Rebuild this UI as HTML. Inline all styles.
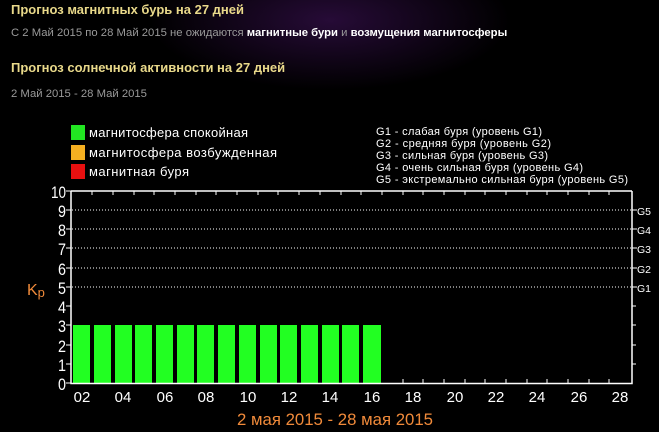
<!DOCTYPE html>
<html><head><meta charset="utf-8"><style>
body{margin:0;width:659px;height:432px;overflow:hidden;background:#000;font-family:"Liberation Sans",sans-serif;position:relative}
.bg{position:absolute;left:0;top:0;width:659px;height:110px;background:radial-gradient(ellipse 180px 70px at 330px 20px,rgba(70,20,100,.55),rgba(0,0,0,0))}
.t{position:absolute;left:11px;color:#e9d98a;font-weight:bold;font-size:13px}
.s{position:absolute;left:11px;color:#9a9a9a;font-size:11.3px}
.s b{color:#fff}
</style></head><body>
<div class="bg"></div>
<div class="t" style="top:2px">Прогноз магнитных бурь на 27 дней</div>
<div class="s" style="top:27px">С 2 Май 2015 по 28 Май 2015 не ожидаются <b>магнитные бури</b> и <b>возмущения магнитосферы</b></div>
<div class="t" style="top:60px">Прогноз солнечной активности на 27 дней</div>
<div class="s" style="top:88px">2 Май 2015 - 28 Май 2015</div>
<svg width="659" height="432" style="position:absolute;left:0;top:0" font-family="Liberation Sans, sans-serif">
<rect x="71" y="125" width="14" height="15" fill="#22e622"/>
<rect x="71" y="145" width="14" height="15" fill="#f5b021"/>
<rect x="71" y="164" width="14" height="15" fill="#e81010"/>
<g fill="#fff" font-size="13"><text x="89" y="137" textLength="159">магнитосфера спокойная</text><text x="89" y="157" textLength="188">магнитосфера возбужденная</text><text x="89" y="176" textLength="100">магнитная буря</text></g>
<g fill="#fff" font-size="11"><text x="376" y="135" textLength="166">G1 - слабая буря (уровень G1)</text><text x="376" y="147" textLength="175">G2 - средняя буря (уровень G2)</text><text x="376" y="159" textLength="172">G3 - сильная буря (уровень G3)</text><text x="376" y="171" textLength="207">G4 - очень сильная буря (уровень G4)</text><text x="376" y="183" textLength="252">G5 - экстремально сильная буря (уровень G5)</text></g>
<g fill="#22ff22">
<rect x="73" y="325" width="17" height="58"/><rect x="94" y="325" width="17" height="58"/><rect x="115" y="325" width="17" height="58"/><rect x="135" y="325" width="17" height="58"/><rect x="156" y="325" width="17" height="58"/><rect x="177" y="325" width="17" height="58"/><rect x="197" y="325" width="17" height="58"/><rect x="218" y="325" width="17" height="58"/><rect x="239" y="325" width="17" height="58"/><rect x="260" y="325" width="17" height="58"/><rect x="280" y="325" width="17" height="58"/><rect x="301" y="325" width="17" height="58"/><rect x="322" y="325" width="17" height="58"/><rect x="342" y="325" width="17" height="58"/><rect x="363" y="325" width="18" height="58"/>
</g>
<g stroke="#fff" stroke-width="1" stroke-dasharray="1,2">
<line x1="72" y1="210" x2="631" y2="210"/><line x1="72" y1="229" x2="631" y2="229"/><line x1="72" y1="248" x2="631" y2="248"/><line x1="72" y1="268" x2="631" y2="268"/><line x1="72" y1="287" x2="631" y2="287"/></g>
<g stroke="#fff" stroke-width="1.5" fill="none"><polyline points="71,191 71,383.5 632,383.5 632,191"/><line x1="71" y1="191" x2="632" y2="191"/></g>
<g stroke="#fff" stroke-width="1">
<path d="M66 191h5M66 210h5M66 229h5M66 248h5M66 268h5M66 287h5M66 306h5M66 325h5M66 345h5M66 364h5M66 383h5M632 210h5M632 229h5M632 248h5M632 268h5M632 287h5M632 306h4M632 325h4M632 345h4M632 364h4"/>
<path d="M92 191v4M113 191v4M134 191v4M154 191v4M175 191v4M196 191v4M216 191v4M237 191v4M258 191v4M278 191v4M299 191v4M320 191v4M341 191v4M361 191v4M382 191v4M403 191v4M423 191v4M444 191v4M465 191v4M485 191v4M506 191v4M527 191v4M547 191v4M568 191v4M589 191v4M609 191v4M403 383v-4M423 383v-4M444 383v-4M465 383v-4M485 383v-4M506 383v-4M527 383v-4M547 383v-4M568 383v-4M589 383v-4M609 383v-4"/></g>
<g fill="#fff" font-size="17" text-anchor="end"><text x="66" y="198" textLength="15" lengthAdjust="spacingAndGlyphs">10</text><text x="66" y="217" textLength="8" lengthAdjust="spacingAndGlyphs">9</text><text x="66" y="236" textLength="8" lengthAdjust="spacingAndGlyphs">8</text><text x="66" y="255" textLength="8" lengthAdjust="spacingAndGlyphs">7</text><text x="66" y="275" textLength="8" lengthAdjust="spacingAndGlyphs">6</text><text x="66" y="294" textLength="8" lengthAdjust="spacingAndGlyphs">5</text><text x="66" y="313" textLength="8" lengthAdjust="spacingAndGlyphs">4</text><text x="66" y="332" textLength="8" lengthAdjust="spacingAndGlyphs">3</text><text x="66" y="352" textLength="8" lengthAdjust="spacingAndGlyphs">2</text><text x="66" y="371" textLength="8" lengthAdjust="spacingAndGlyphs">1</text><text x="66" y="390" textLength="8" lengthAdjust="spacingAndGlyphs">0</text></g>
<text x="27" y="295" fill="#f08a3a" font-size="16">K<tspan font-size="13" dy="2">p</tspan></text>
<g fill="#fff" font-size="10.5"><text x="637" y="215">G5</text><text x="637" y="234">G4</text><text x="637" y="253">G3</text><text x="637" y="273">G2</text><text x="637" y="292">G1</text></g>
<g fill="#fff" font-size="15" text-anchor="middle"><text x="82" y="402">02</text><text x="123" y="402">04</text><text x="165" y="402">06</text><text x="206" y="402">08</text><text x="248" y="402">10</text><text x="289" y="402">12</text><text x="330" y="402">14</text><text x="372" y="402">16</text><text x="413" y="402">18</text><text x="455" y="402">20</text><text x="496" y="402">22</text><text x="537" y="402">24</text><text x="579" y="402">26</text><text x="620" y="402">28</text></g>
<text x="335" y="425" fill="#f08a3a" font-size="17" text-anchor="middle" textLength="196" lengthAdjust="spacingAndGlyphs">2 мая 2015 - 28 мая 2015</text>
</svg>
</body></html>
